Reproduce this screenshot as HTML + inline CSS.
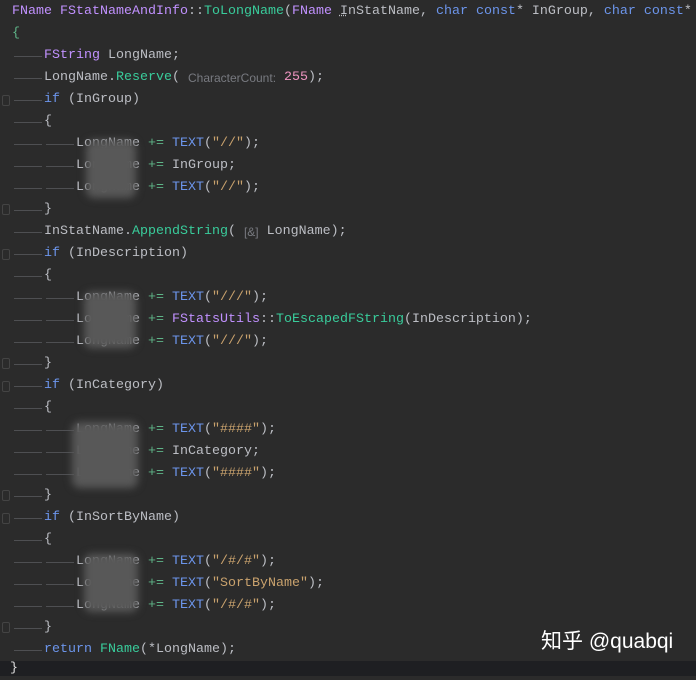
<!DOCTYPE html><html><head><meta charset="utf-8"><style>
body{margin:0;width:696px;height:676px;background:#2b2b2b;overflow:hidden;position:relative;font-family:"Liberation Mono",monospace;font-size:13.33px;color:#bcbec4}
.l{position:absolute;left:12px;height:22px;line-height:22px;white-space:pre}
.g{display:inline-block;width:32px;height:22px;vertical-align:top;background:linear-gradient(#4e4f52,#4e4f52) 2px 11px/28px 1px no-repeat}
.f{color:#c191ff}.k{color:#6c95eb}.s{color:#c9a26d}.m{color:#39cc9b}.n{color:#ed94c0}.h{color:#787a80;font-family:"Liberation Sans",sans-serif;font-size:12px;line-height:22px;vertical-align:top}.o{color:#5fb588}.t{color:#6c95eb}
.bl{position:absolute;background:#585858;filter:blur(4px);border-radius:8px}
.fold{position:absolute;left:2px;width:6px;height:9px;border:1px solid #444;border-radius:2px}
</style></head><body>
<div class="l" style="top:1px;left:12px"><span class="f">FName</span> <span class="f">FStatNameAndInfo</span>::<span class="m">ToLongName</span>(<span class="f">FName</span> <u style="text-decoration-style:dotted">I</u>nStatName, <span class="k">char const</span>* InGroup, <span class="k">char const</span>*</div>
<div class="l" style="top:23px"><span class="o">{</span></div>
<div class="l" style="top:45px;left:12px"><span class="g"></span><span class="f">FString</span> LongName;</div>
<div class="l" style="top:67px;left:12px"><span class="g"></span>LongName.<span class="m">Reserve</span>( <span class="h">CharacterCount:</span> <span class="n">255</span>);</div>
<div class="l" style="top:89px;left:12px"><span class="g"></span><span class="k">if</span> (InGroup)</div>
<div class="l" style="top:111px;left:12px"><span class="g"></span>{</div>
<div class="l" style="top:133px;left:12px"><span class="g"></span><span class="g"></span>LongName <span class="o">+=</span> <span class="t">TEXT</span>(<span class="s">"//"</span>);</div>
<div class="l" style="top:155px;left:12px"><span class="g"></span><span class="g"></span>LongName <span class="o">+=</span> InGroup;</div>
<div class="l" style="top:177px;left:12px"><span class="g"></span><span class="g"></span>LongName <span class="o">+=</span> <span class="t">TEXT</span>(<span class="s">"//"</span>);</div>
<div class="l" style="top:199px;left:12px"><span class="g"></span>}</div>
<div class="l" style="top:221px;left:12px"><span class="g"></span>InStatName.<span class="m">AppendString</span>( <span class="h">[&amp;]</span> LongName);</div>
<div class="l" style="top:243px;left:12px"><span class="g"></span><span class="k">if</span> (InDescription)</div>
<div class="l" style="top:265px;left:12px"><span class="g"></span>{</div>
<div class="l" style="top:287px;left:12px"><span class="g"></span><span class="g"></span>LongName <span class="o">+=</span> <span class="t">TEXT</span>(<span class="s">"///"</span>);</div>
<div class="l" style="top:309px;left:12px"><span class="g"></span><span class="g"></span>LongName <span class="o">+=</span> <span class="f">FStatsUtils</span>::<span class="m">ToEscapedFString</span>(InDescription);</div>
<div class="l" style="top:331px;left:12px"><span class="g"></span><span class="g"></span>LongName <span class="o">+=</span> <span class="t">TEXT</span>(<span class="s">"///"</span>);</div>
<div class="l" style="top:353px;left:12px"><span class="g"></span>}</div>
<div class="l" style="top:375px;left:12px"><span class="g"></span><span class="k">if</span> (InCategory)</div>
<div class="l" style="top:397px;left:12px"><span class="g"></span>{</div>
<div class="l" style="top:419px;left:12px"><span class="g"></span><span class="g"></span>LongName <span class="o">+=</span> <span class="t">TEXT</span>(<span class="s">"####"</span>);</div>
<div class="l" style="top:441px;left:12px"><span class="g"></span><span class="g"></span>LongName <span class="o">+=</span> InCategory;</div>
<div class="l" style="top:463px;left:12px"><span class="g"></span><span class="g"></span>LongName <span class="o">+=</span> <span class="t">TEXT</span>(<span class="s">"####"</span>);</div>
<div class="l" style="top:485px;left:12px"><span class="g"></span>}</div>
<div class="l" style="top:507px;left:12px"><span class="g"></span><span class="k">if</span> (InSortByName)</div>
<div class="l" style="top:529px;left:12px"><span class="g"></span>{</div>
<div class="l" style="top:551px;left:12px"><span class="g"></span><span class="g"></span>LongName <span class="o">+=</span> <span class="t">TEXT</span>(<span class="s">"/#/#"</span>);</div>
<div class="l" style="top:573px;left:12px"><span class="g"></span><span class="g"></span>LongName <span class="o">+=</span> <span class="t">TEXT</span>(<span class="s">"SortByName"</span>);</div>
<div class="l" style="top:595px;left:12px"><span class="g"></span><span class="g"></span>LongName <span class="o">+=</span> <span class="t">TEXT</span>(<span class="s">"/#/#"</span>);</div>
<div class="l" style="top:617px;left:12px"><span class="g"></span>}</div>
<div class="l" style="top:639px;left:12px"><span class="g"></span><span class="k">return</span> <span class="m">FName</span>(*LongName);</div>
<div class="bl" style="left:86px;top:140px;width:50px;height:58px"></div>
<div class="bl" style="left:84px;top:292px;width:52px;height:56px"></div>
<div class="bl" style="left:72px;top:422px;width:66px;height:66px"></div>
<div class="bl" style="left:84px;top:554px;width:54px;height:58px"></div>
<div class="fold" style="top:95px"></div><div class="fold" style="top:204px"></div><div class="fold" style="top:249px"></div><div class="fold" style="top:358px"></div><div class="fold" style="top:381px"></div><div class="fold" style="top:490px"></div><div class="fold" style="top:513px"></div><div class="fold" style="top:622px"></div>
<div style="position:absolute;left:541px;top:627px;color:#fff;font-family:'Liberation Sans','Noto Sans CJK SC',sans-serif;font-size:21px;line-height:30px">知乎 @quabqi</div>
<div style="position:absolute;left:0;top:661px;width:696px;height:15px;background:#1e1f22"></div>
<div class="l" style="top:658px;left:10px;color:#ddd">}</div>
</body></html>
